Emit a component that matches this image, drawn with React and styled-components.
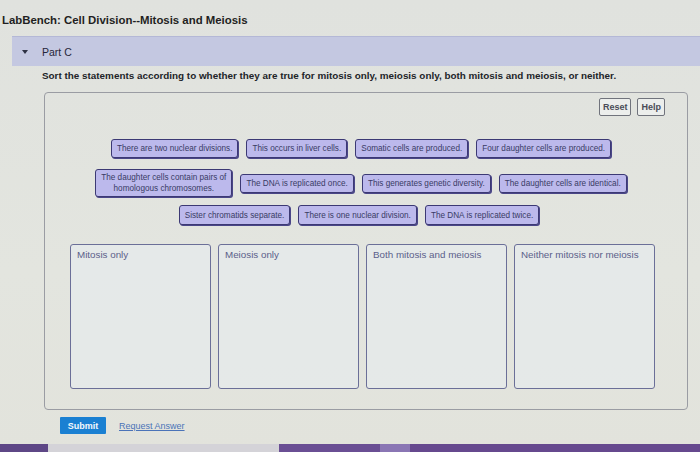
import React from "react";
import styled, { createGlobalStyle } from "styled-components";

const GlobalStyle = createGlobalStyle`
  html, body {
    margin: 0;
    padding: 0;
    background: #e1e3dd;
  }
  body {
    font-family: "Liberation Sans", Arial, sans-serif;
  }
`;

const Page = styled.div`
  width: 700px;
  height: 452px;
  display: flex;
  flex-direction: column;
  overflow: hidden;
  background: linear-gradient(180deg, #e0e2de 0%, #e3e5df 60%, #e2e3dc 100%);
`;

const Title = styled.h1`
  margin: 14px 0 0 2px;
  font-size: 11.4px;
  font-weight: 700;
  color: #1f1f22;
`;

const PartBar = styled.div`
  margin: 10px 0 0 12px;
  height: 29px;
  display: flex;
  align-items: center;
  background: #c4c8e1;
  border-top: 1px solid #b4b8d6;
  font-size: 10.5px;
  color: #26263a;
`;

const Caret = styled.span`
  width: 0;
  height: 0;
  margin: 0 14px 0 10px;
  border-left: 3.5px solid transparent;
  border-right: 3.5px solid transparent;
  border-top: 4px solid #2e3144;
`;

const Instruction = styled.p`
  margin: 4px 0 0 42px;
  font-size: 9.9px;
  font-weight: 700;
  color: #222428;
`;

const Panel = styled.div`
  margin: 11px 12px 0 44px;
  height: 318px;
  box-sizing: border-box;
  border: 1px solid #9a9ca3;
  border-radius: 4px;
  display: flex;
  flex-direction: column;
`;

const Toolbar = styled.div`
  display: flex;
  justify-content: flex-end;
  gap: 6px;
  padding: 5px 22px 0 0;
`;

const ToolButton = styled.button`
  font-family: inherit;
  font-size: 9px;
  font-weight: 700;
  color: #4a4c58;
  background: #eceeec;
  border: 1px solid #70737c;
  border-radius: 2px;
  padding: 3px 3px;
  line-height: 10px;
`;

const Tray = styled.div`
  display: flex;
  flex-direction: column;
  align-items: center;
  margin-top: 23px;
  padding-right: 10px;
`;

const ChipRow = styled.div`
  display: flex;
  align-items: center;
  gap: 8px;
  margin-top: ${p => p.$top || 0}px;
  margin-left: ${p => p.$shift || 0}px;
`;

const Chip = styled.div`
  box-sizing: border-box;
  min-height: ${p => (p.$tall ? 20 : 19)}px;
  display: flex;
  align-items: center;
  justify-content: center;
  text-align: center;
  padding: 2px 5px;
  font-size: 8.2px;
  line-height: 11px;
  color: #393b64;
  background: #bcb9ec;
  border: 1.5px solid #3c3974;
  border-radius: 3px;
  box-shadow: 1px 1px 0 #4a4688;
`;

const Bins = styled.div`
  display: flex;
  gap: 7px;
  margin: 19px 0 0 25px;
`;

const Bin = styled.div`
  box-sizing: border-box;
  width: 141px;
  height: 145px;
  border: 1.5px solid #6b6f98;
  border-radius: 3px;
  background: rgba(232, 236, 240, 0.55);
  padding: 4px 6px;
  font-size: 9.8px;
  color: #5b5f8a;
`;

const Footer = styled.div`
  display: flex;
  align-items: center;
  gap: 13px;
  margin: 7px 0 0 60px;
`;

const Submit = styled.button`
  font-family: inherit;
  font-size: 9px;
  font-weight: 700;
  color: #f4f8fc;
  background: #1a80d2;
  border: none;
  border-radius: 1px;
  width: 46px;
  height: 17px;
`;

const AnswerLink = styled.a`
  font-size: 9px;
  color: #4a73b8;
  text-decoration: underline;
`;

const Taskbar = styled.div`
  margin-top: auto;
  height: 8px;
  display: flex;
`;

const Segment = styled.div`
  width: ${p => p.$w}px;
  flex: ${p => (p.$w ? "none" : 1)};
  background: ${p => p.$c};
`;

const statementRows = [
  {
    top: 0,
    shift: 0,
    items: [
      "There are two nuclear divisions.",
      "This occurs in liver cells.",
      "Somatic cells are produced.",
      "Four daughter cells are produced.",
    ],
  },
  {
    top: 11,
    shift: 0,
    items: [
      ["The daughter cells contain pairs of", "homologous chromosomes."],
      "The DNA is replicated once.",
      "This generates genetic diversity.",
      "The daughter cells are identical.",
    ],
  },
  {
    top: 8,
    shift: -4,
    tall: true,
    items: [
      "Sister chromatids separate.",
      "There is one nuclear division.",
      "The DNA is replicated twice.",
    ],
  },
];

const bins = [
  "Mitosis only",
  "Meiosis only",
  "Both mitosis and meiosis",
  "Neither mitosis nor meiosis",
];

const App = () => {
  return (
    <Page>
      <GlobalStyle />
      <Title>LabBench: Cell Division--Mitosis and Meiosis</Title>
      <PartBar>
        <Caret />
        Part C
      </PartBar>
      <Instruction>
        Sort the statements according to whether they are true for mitosis only, meiosis only, both mitosis and meiosis, or neither.
      </Instruction>
      <Panel>
        <Toolbar>
          <ToolButton>Reset</ToolButton>
          <ToolButton>Help</ToolButton>
        </Toolbar>
        <Tray>
          {statementRows.map((row, i) => (
            <ChipRow key={i} $top={row.top} $shift={row.shift}>
              {row.items.map((text, j) => (
                <Chip key={j} $tall={row.tall}>
                  {Array.isArray(text) ? (
                    <span>
                      {text[0]}
                      <br />
                      {text[1]}
                    </span>
                  ) : (
                    text
                  )}
                </Chip>
              ))}
            </ChipRow>
          ))}
        </Tray>
        <Bins>
          {bins.map(label => (
            <Bin key={label}>{label}</Bin>
          ))}
        </Bins>
      </Panel>
      <Footer>
        <Submit>Submit</Submit>
        <AnswerLink>Request Answer</AnswerLink>
      </Footer>
      <Taskbar>
        <Segment $w={48} $c="#5e4786" />
        <Segment $w={231} $c="#d4d3d8" />
        <Segment $w={101} $c="#6a4f94" />
        <Segment $w={30} $c="#8a76b4" />
        <Segment $c="#66498e" />
      </Taskbar>
    </Page>
  );
};

export default App;
